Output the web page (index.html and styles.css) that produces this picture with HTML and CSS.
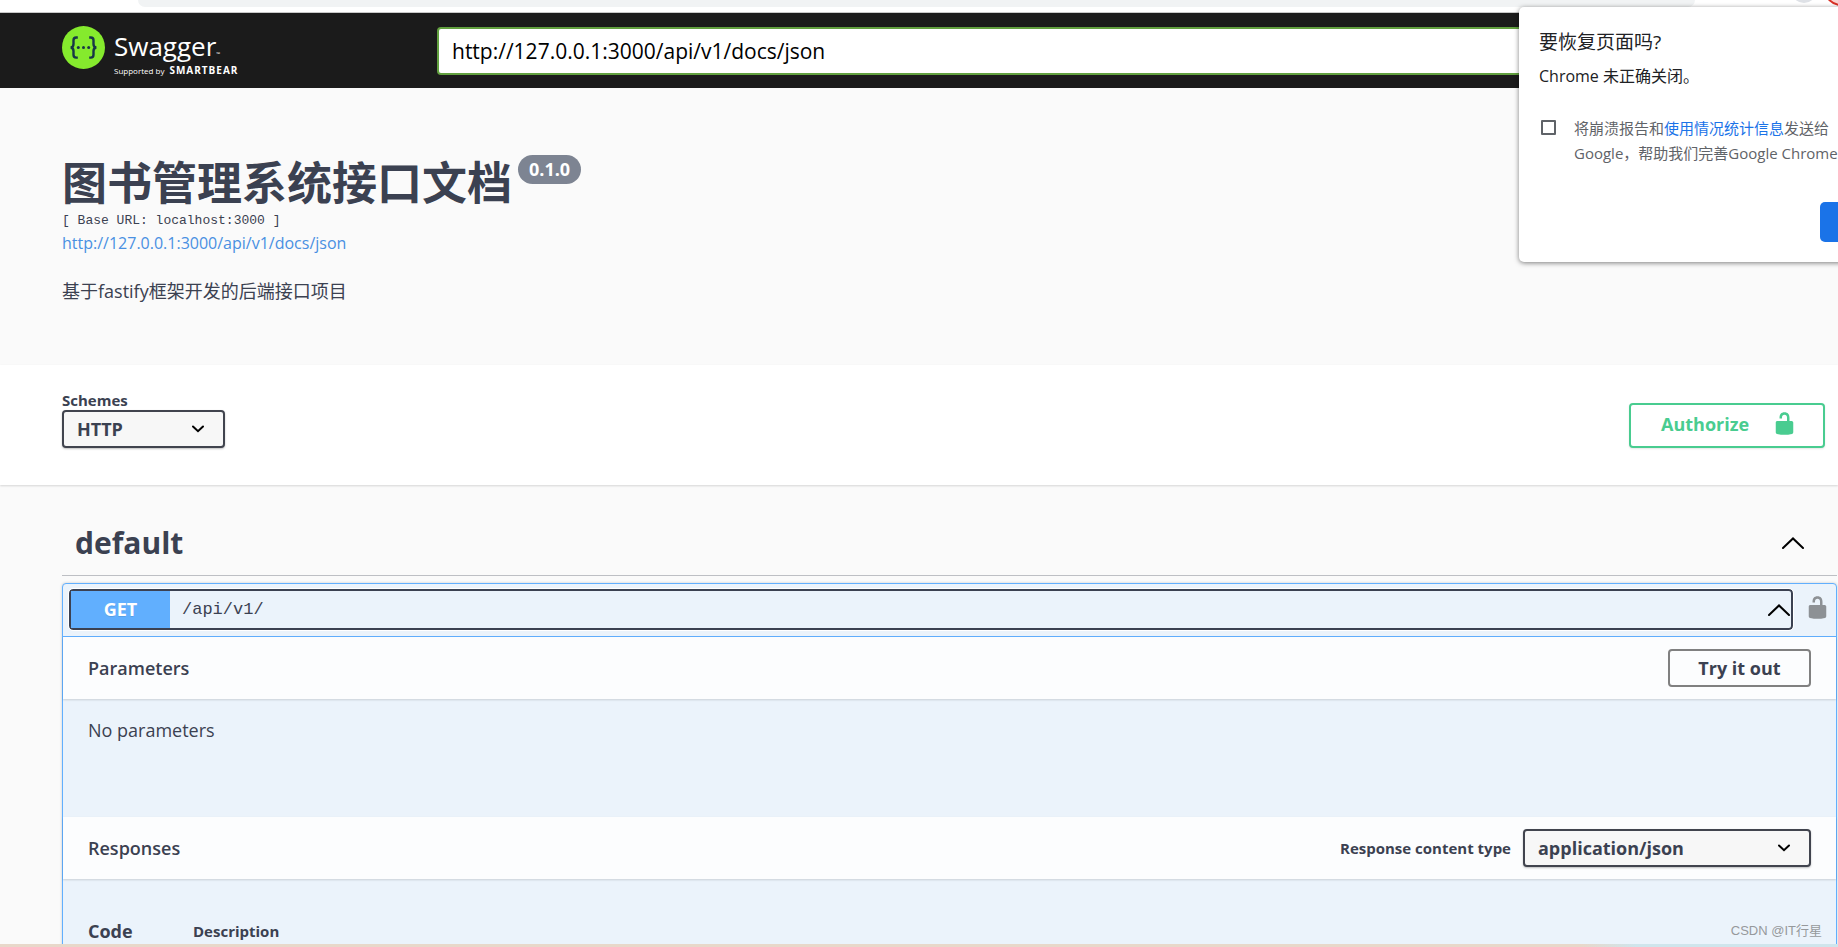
FILE: index.html
```html
<!DOCTYPE html>
<html lang="zh-CN">
<head>
<meta charset="utf-8">
<title>Swagger UI</title>
<link rel="stylesheet" href="styles.css">
</head>
<body>
<svg class="defs" width="0" height="0" aria-hidden="true">
  <symbol id="unlocked" viewBox="0 0 20 20"><path d="M15.8 8H14V5.600C14 2.703 12.665 1 10 1 7.334 1 6 2.703 6 5.600V6h2v-.801C8 3.754 8.797 3 10 3c1.203 0 2 .754 2 2.199V8H4c-.553 0-1 .646-1 1.199V17c0 .549.428 1.139.951 1.307l1.197.387C5.672 18.861 6.550 19 7.100 19h5.800c.549 0 1.428-.139 1.951-.307l1.196-.387c.524-.167.953-.757.953-1.306V9.199C17 8.646 16.352 8 15.800 8z"/></symbol>
  <symbol id="chevron-up" viewBox="0 0 22 12"><path d="M1 11 11 1.500 21 11" fill="none" stroke="#000" stroke-width="2" stroke-linecap="round"/></symbol>
  <symbol id="chevron-down" viewBox="0 0 12 8"><path d="M1 1.500 6 6.200 11 1.500" fill="none" stroke="#000" stroke-width="2" stroke-linecap="round"/></symbol>
</svg>

<div class="browser"><div class="address"></div><div class="dot"></div><div class="avatar"></div></div>

<header class="topbar">
  <a class="logo" href="#">
    <svg class="logo-mark" viewBox="0 0 43 43" aria-hidden="true">
      <circle cx="21.500" cy="21.500" r="21.500" fill="#85ea2d"/>
      <g fill="none" stroke="#173647" stroke-width="2.400">
        <path d="M15.800 11.500h-1.600c-2 0-2.700 1-2.700 2.800v3.600c0 2-.8 3.200-2.700 3.600 1.900.4 2.700 1.600 2.700 3.600v3.600c0 1.900.7 2.900 2.700 2.900h1.600"/>
        <path d="M27.200 11.500h1.600c2 0 2.700 1 2.700 2.800v3.600c0 2 .8 3.200 2.700 3.600-1.900.4-2.700 1.600-2.700 3.600v3.600c0 1.900-.7 2.900-2.700 2.900h-1.600"/>
      </g>
      <g fill="#173647"><circle cx="16.300" cy="21.500" r="1.500"/><circle cx="21.500" cy="21.500" r="1.500"/><circle cx="26.700" cy="21.500" r="1.500"/></g>
    </svg>
    <span class="logo-text">
      <span class="logo-name">Swagger<small>™</small></span>
      <span class="logo-by"><span>Supported by</span><b>SMARTBEAR</b></span>
    </span>
  </a>
  <input class="url" type="text" aria-label="API URL" value="http://127.0.0.1:3000/api/v1/docs/json">
</header>

<main class="page">
  <section class="info">
    <h1 class="title">图书管理系统接口文档<span class="version">0.1.0</span></h1>
    <pre class="base">[ Base URL: localhost:3000 ]</pre>
    <a class="spec-link" href="#">http://127.0.0.1:3000/api/v1/docs/json</a>
    <p class="description">基于fastify框架开发的后端接口项目</p>
  </section>

  <section class="schemes">
    <div>
      <label class="small-label" for="scheme">Schemes</label>
      <div class="select scheme-select">
        <select id="scheme"><option>HTTP</option></select>
        <svg class="arrow"><use href="#chevron-down"/></svg>
      </div>
    </div>
    <button class="authorize" type="button">Authorize <svg class="lock"><use href="#unlocked"/></svg></button>
  </section>

  <section class="operations">
    <h2 class="tag"><span>default</span><button class="plain" type="button" aria-label="Collapse default"><svg class="chevron"><use href="#chevron-up"/></svg></button></h2>
    <article class="opblock">
      <div class="summary">
        <button class="summary-control" type="button">
          <span class="method">GET</span><span class="path">/api/v1/</span>
          <svg class="chevron"><use href="#chevron-up"/></svg>
        </button>
        <button class="plain op-lock" type="button" aria-label="Authorization"><svg class="lock"><use href="#unlocked"/></svg></button>
      </div>
      <div class="section-header"><h3>Parameters</h3><button class="try" type="button">Try it out</button></div>
      <p class="no-params">No parameters</p>
      <div class="section-header">
        <h3>Responses</h3>
        <div class="content-type">
          <label class="small-label" for="type">Response content type</label>
          <div class="select type-select">
            <select id="type"><option>application/json</option></select>
            <svg class="arrow"><use href="#chevron-down"/></svg>
          </div>
        </div>
      </div>
      <table class="responses"><thead><tr><th class="code">Code</th><th>Description</th></tr></thead></table>
    </article>
  </section>
</main>
<div class="strip"></div>

<aside class="restore">
  <h2>要恢复页面吗?</h2>
  <p class="restore-text">Chrome 未正确关闭。</p>
  <div class="consent">
    <input id="report" type="checkbox">
    <label for="report">将崩溃报告和<a href="#">使用情况统计信息</a>发送给<br>Google，帮助我们完善Google Chrome</label>
  </div>
  <button class="restore-button" type="button" aria-label="恢复"></button>
</aside>
<div class="watermark">CSDN @IT行星</div>
</body>
</html>
```
FILE: styles.css
```css
* { box-sizing: border-box; }
body {
  margin: 0;
  height: 100vh;
  display: flex;
  flex-direction: column;
  position: relative;
  overflow: hidden;
  background: #fafafa;
  color: #3b4151;
  font-family: "Open Sans", "Noto Sans CJK SC", sans-serif;
  font-size: 18px;
}
h1, h2, h3, p, pre { margin: 0; }
a { text-decoration: none; }
button, select, input { font: inherit; color: inherit; }
button { padding: 0; }
.defs { position: absolute; }
.plain { display: flex; border: 0; background: none; }

.browser {
  flex: none;
  display: flex;
  height: 13px;
  padding-left: 138px;
  overflow: hidden;
  background: #fff;
  border-bottom: 1px solid #c8c8c8;
}
.address { flex: 1; height: 7px; background: #f1f3f4; border-radius: 0 0 16px 16px; margin-right: 96px; }
.dot { width: 26px; height: 26px; margin: -23px 7px 0 0; border-radius: 50%; background: #dee1e6; }
.avatar { width: 34px; height: 34px; margin: -28px -20px 0 0; border: 2px solid #d93025; border-radius: 50%; background: #fad2cf; }

.topbar {
  flex: none;
  display: flex;
  align-items: center;
  height: 75px;
  padding-left: 62px;
  background: #1b1b1b;
}
.logo { display: flex; gap: 9px; width: 375px; height: 50px; color: #fff; }
.logo-mark { width: 43px; height: 43px; }
.logo-text { display: flex; flex-direction: column; }
.logo-name { height: 38px; font-size: 26px; line-height: 40px; }
.logo-name small { font-size: 5px; }
.logo-by { display: flex; align-items: baseline; gap: 5px; height: 12px; font-size: 8px; line-height: 12px; }
.logo-by b { font-size: 10px; letter-spacing: 1px; }
.url {
  flex: 1;
  height: 48px;
  padding: 0 13px;
  border: 2px solid #62a03f;
  border-radius: 4px 0 0 4px;
  background: #fff;
  color: #000;
  font-size: 21px;
}

.page { flex: 1; min-height: 0; overflow: hidden; }
.info { height: 277px; padding: 67px 62px 0; }
.title { display: flex; align-items: flex-start; gap: 6px; font-size: 45px; line-height: 56px; }
.version {
  padding: 0 11px;
  border-radius: 15px;
  background: #7d8492;
  color: #fff;
  font-size: 18px;
  line-height: 29px;
}
.base { font: 13px/20px "Liberation Mono", monospace; }
.spec-link { display: block; color: #4990e2; font-size: 16px; line-height: 24px; }
.description { margin-top: 24px; font-size: 18px; line-height: 24px; }

.schemes {
  display: flex;
  justify-content: space-between;
  height: 120px;
  padding: 26px 13px 0 62px;
  background: #fff;
  box-shadow: 0 1px 2px rgba(0, 0, 0, .15);
}
.small-label { display: block; font-size: 15px; font-weight: 700; line-height: 19px; }
.select {
  display: grid;
  align-items: center;
  height: 38px;
}
.select > * { grid-area: 1 / 1; }
.select select {
  appearance: none;
  height: 38px;
  padding: 0 13px;
  border: 2px solid #41444e;
  border-radius: 4px;
  background: #f7f7f7;
  box-shadow: 0 1px 2px rgba(0, 0, 0, .25);
  font-size: 18px;
  font-weight: 700;
}
.arrow { justify-self: end; width: 12px; height: 8px; margin-right: 21px; pointer-events: none; }
.scheme-select { width: 163px; }
.type-select { width: 288px; }
.authorize {
  display: flex;
  align-items: center;
  justify-content: space-between;
  width: 196px;
  height: 45px;
  margin-top: 12px;
  padding: 0 26px 4px 30px;
  border: 2px solid #49cc90;
  border-radius: 4px;
  background: #fff;
  box-shadow: 0 1px 2px rgba(0, 0, 0, .1);
  color: #49cc90;
  font-weight: 700;
}
.lock { width: 25px; height: 25px; fill: currentColor; }
.chevron { width: 22px; height: 12px; }

.operations { padding: 44px 1px 0 62px; }
.tag {
  display: flex;
  align-items: center;
  justify-content: space-between;
  padding: 0 33px 19px 13px;
  border-bottom: 1px solid #bdbfc4;
  font-size: 30px;
  line-height: 27px;
}
.opblock {
  margin-top: 7px;
  height: 400px;
  border: 1px solid #61affe;
  border-radius: 4px;
  background: #ebf3fb;
  box-shadow: 0 0 3px rgba(0, 0, 0, .19);
}
.summary { display: flex; align-items: center; height: 53px; padding: 0 6px 1px; border-bottom: 1px solid #61affe; }
.summary-control {
  flex: 1;
  display: flex;
  align-items: center;
  height: 41px;
  padding-right: 1px;
  border: 2px solid #3b4151;
  border-radius: 4px;
  outline: 1px solid #fff;
  background: transparent;
  text-align: left;
}
.method {
  width: 99px;
  background: #61affe;
  color: #fff;
  font-size: 18px;
  font-weight: 700;
  line-height: 37px;
  text-align: center;
  text-shadow: 0 1px 0 rgba(0, 0, 0, .1);
}
.path { flex: 1; padding-left: 12px; font: 17px/24px "Liberation Mono", monospace; }
.op-lock { margin: 0 0 4px 12px; color: #8d9195; }
.section-header {
  display: flex;
  align-items: center;
  justify-content: space-between;
  height: 62px;
  padding: 0 25px;
  background: #fcfdfe;
  box-shadow: 0 1px 2px rgba(0, 0, 0, .15);
}
.section-header h3 { font-size: 18px; font-weight: 600; line-height: 24px; }
.try {
  width: 143px;
  height: 38px;
  border: 2px solid #808080;
  border-radius: 4px;
  background: transparent;
  font-weight: 700;
}
.no-params { height: 118px; padding: 19px 25px; font-size: 18px; line-height: 24px; }
.content-type { display: flex; align-items: center; gap: 12px; }
.responses { margin: 40px 25px 0; border-collapse: collapse; }
.responses th { padding: 0; font-size: 15px; line-height: 24px; text-align: left; }
.responses .code { width: 105px; font-size: 18px; }

.strip { flex: none; height: 3px; background: linear-gradient(to right, #e8d8ca 0 86%, #cfe5ec 89%); }

.restore {
  position: absolute;
  top: 7px;
  right: -80px;
  width: 399px;
  height: 255px;
  padding: 20px;
  border-radius: 5px;
  background: #fff;
  box-shadow: 0 1px 5px rgba(0, 0, 0, .5);
  color: #202124;
}
.restore h2 { font-size: 19px; font-weight: 400; line-height: 30px; }
.restore-text { margin-top: 6px; font-size: 16px; line-height: 26px; }
.consent { display: flex; gap: 18px; margin-top: 27px; color: #5f6368; font-size: 15px; line-height: 25px; white-space: nowrap; }
.consent input { appearance: none; flex: none; width: 15px; height: 15px; margin: 4px 0 0 2px; border: 2px solid #5f6368; border-radius: 1px; }
.consent a { color: #1a73e8; }
.restore-button { display: block; width: 78px; height: 40px; margin: 36px 0 0 281px; border: 0; border-radius: 5px; background: #1a73e8; }
.watermark { position: absolute; right: 16px; bottom: 5px; color: #96999c; font: 13px/22px "Liberation Sans", "Noto Sans CJK SC", sans-serif; }
```
